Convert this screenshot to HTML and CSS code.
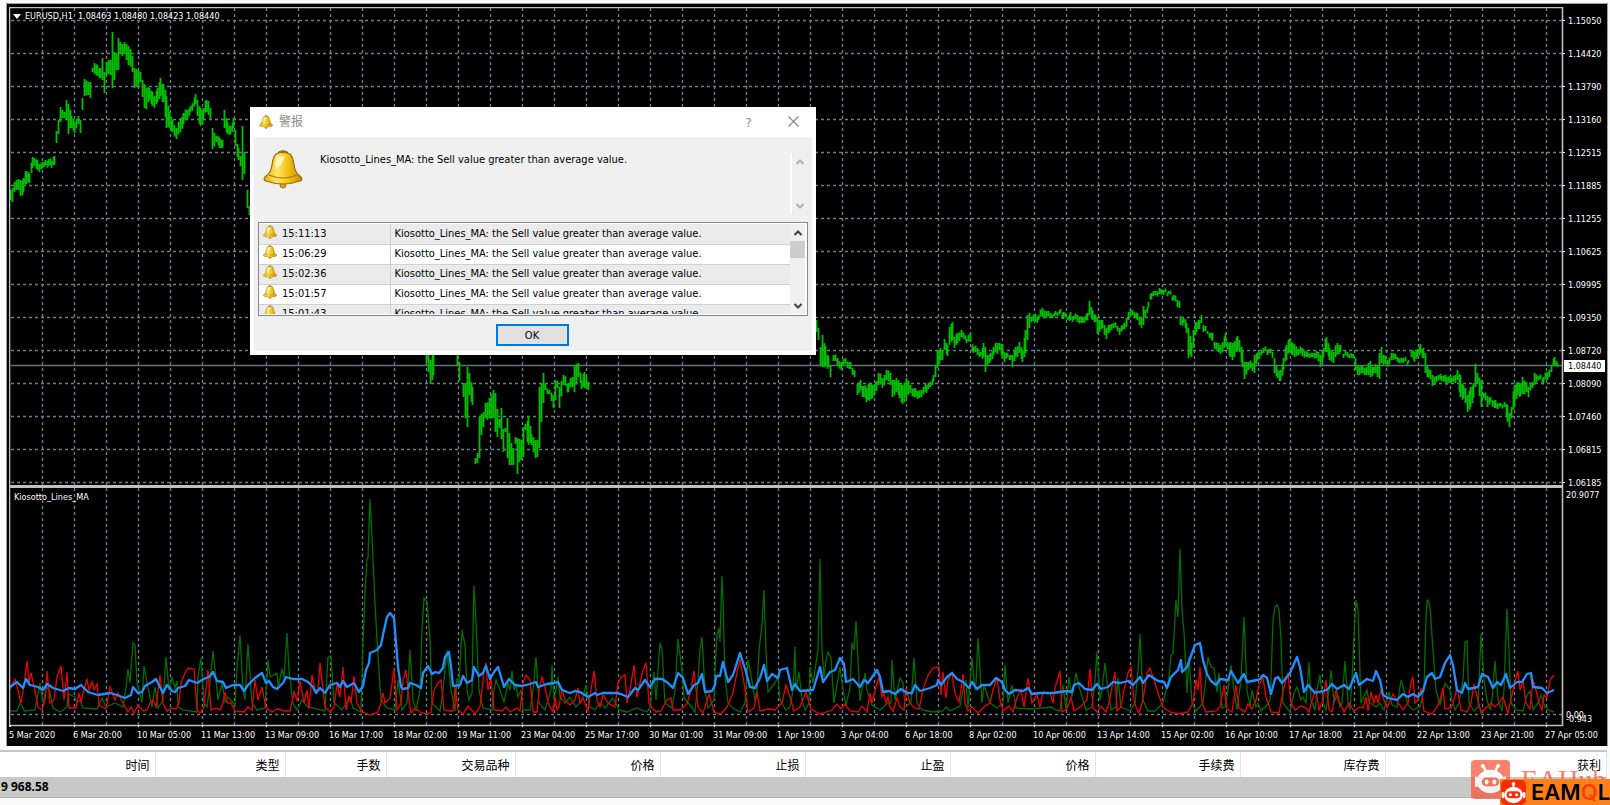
FILE: index.html
```html
<!DOCTYPE html>
<html lang="zh-CN">
<head>
    <meta charset="UTF-8">
    <meta name="viewport" content="width=device-width, initial-scale=1.0">
    <title>EURUSD,H1</title>
    <link rel="stylesheet" href="styles.css">
</head>
<body>
    <svg class="defs" width="0" height="0" aria-hidden="true">
        <defs>
            <linearGradient id="gold" x1="0" x2="1" y1="0" y2="0">
                <stop offset="0" stop-color="#e9b208"/>
                <stop offset="0.35" stop-color="#ffe566"/>
                <stop offset="0.65" stop-color="#f0c010"/>
                <stop offset="1" stop-color="#c98a00"/>
            </linearGradient>
            <symbol id="bell" viewBox="0 0 40 40">
                <circle cx="20" cy="36" r="3" fill="#e0a810" stroke="#9a6a10"/>
                <path d="M15 3.500Q20 0 25 3.500L24 5H16Z" fill="#b07a18" stroke="#7d5510"/>
                <path d="M13 5Q20 2 27 5Q30 8 31 16Q32 24 38 28Q40 31 37 32Q20 38 3 32Q0 31 2 28Q8 24 9 16Q10 8 13 5Z" fill="url(#gold)" stroke="#9a6a10" stroke-width="1.200"/>
                <path d="M6 26Q20 32 34 26" fill="none" stroke="#a87610" stroke-width="1.200"/>
                <path d="M14 8Q12 14 12 20Q19 18 22 7Z" fill="#fffbd0" opacity=".8"/>
            </symbol>
            <symbol id="up" viewBox="0 0 10 10"><path d="M1.500 7L5 3.500L8.500 7" fill="none" stroke="currentColor" stroke-width="2"/></symbol>
            <symbol id="down" viewBox="0 0 10 10"><path d="M1.500 3L5 6.500L8.500 3" fill="none" stroke="currentColor" stroke-width="2"/></symbol>
            <symbol id="robot" viewBox="0 0 40 40">
                <path d="M12 5L15 11M28 5L25 11" stroke="#fff" stroke-width="2.500"/>
                <circle cx="12" cy="6" r="2" fill="#fff"/>
                <circle cx="28" cy="6" r="2" fill="#fff"/>
                <ellipse cx="20" cy="22" rx="14" ry="12" fill="#fff"/>
                <rect x="4" y="17" width="3" height="11" rx="1.500" fill="#fff"/>
                <rect x="33" y="17" width="3" height="11" rx="1.500" fill="#fff"/>
                <rect x="11" y="18" width="18" height="9" rx="4.500" fill="currentColor"/>
                <rect x="14" y="20" width="4" height="5" rx="2" fill="#fff"/>
                <rect x="22" y="20" width="4" height="5" rx="2" fill="#fff"/>
            </symbol>
            <symbol id="robot-small" viewBox="0 0 40 40">
                <path d="M20 6V13" stroke="#fff" stroke-width="3"/>
                <circle cx="20" cy="6" r="3" fill="#fff"/>
                <ellipse cx="20" cy="24" rx="15" ry="13" fill="#fff"/>
                <rect x="1" y="19" width="4" height="10" rx="2" fill="#fff"/>
                <rect x="35" y="19" width="4" height="10" rx="2" fill="#fff"/>
                <rect x="9" y="18" width="22" height="11" rx="5.500" fill="currentColor"/>
                <circle cx="15" cy="23.500" r="2.500" fill="#fff"/>
                <circle cx="25" cy="23.500" r="2.500" fill="#fff"/>
            </symbol>
        </defs>
    </svg>

    <main class="chart">
        <div class="plot">
            <svg id="plot" viewBox="9 7 1557 720" preserveAspectRatio="none"></svg>
            <div class="symbol-title">
                <svg width="8" height="5" viewBox="0 0 8 5"><path d="M0 0H8L4 5Z" fill="#fff"/></svg>
                <span>EURUSD,H1&nbsp; 1.08463 1.08480 1.08423 1.08440</span>
            </div>
            <div class="indicator-title">Kiosotto_Lines_MA</div>
        </div>
        <div class="prices">
            <div class="scale">
                <span>1.15050</span>
                <span>1.14420</span>
                <span>1.13790</span>
                <span>1.13160</span>
                <span>1.12515</span>
                <span>1.11885</span>
                <span>1.11255</span>
                <span>1.10625</span>
                <span>1.09995</span>
                <span>1.09350</span>
                <span>1.08720</span>
                <span>1.08090</span>
                <span>1.07460</span>
                <span>1.06815</span>
                <span>1.06185</span>
            </div>
            <div class="indicator-max">20.9077</div>
            <div class="indicator-min">
                <span>0.00</span>
                <span>-0.943</span>
            </div>
            <div class="current-price">1.08440</div>
        </div>
        <div class="times">
            <span>5 Mar 2020</span>
            <span>6 Mar 20:00</span>
            <span>10 Mar 05:00</span>
            <span>11 Mar 13:00</span>
            <span>13 Mar 09:00</span>
            <span>16 Mar 17:00</span>
            <span>18 Mar 02:00</span>
            <span>19 Mar 11:00</span>
            <span>23 Mar 04:00</span>
            <span>25 Mar 17:00</span>
            <span>30 Mar 01:00</span>
            <span>31 Mar 09:00</span>
            <span>1 Apr 19:00</span>
            <span>3 Apr 04:00</span>
            <span>6 Apr 18:00</span>
            <span>8 Apr 02:00</span>
            <span>10 Apr 06:00</span>
            <span>13 Apr 14:00</span>
            <span>15 Apr 02:00</span>
            <span>16 Apr 10:00</span>
            <span>17 Apr 18:00</span>
            <span>21 Apr 04:00</span>
            <span>22 Apr 13:00</span>
            <span>23 Apr 21:00</span>
            <span>27 Apr 05:00</span>
        </div>
    </main>

    <section class="terminal">
        <table>
            <colgroup>
                <col class="c-time"><col class="c-type"><col class="c-lots"><col class="c-symbol">
                <col class="c-num"><col class="c-num"><col class="c-num"><col class="c-num"><col class="c-num"><col class="c-num">
                <col>
            </colgroup>
            <thead>
                <tr>
                    <th>时间</th>
                    <th>类型</th>
                    <th>手数</th>
                    <th>交易品种</th>
                    <th>价格</th>
                    <th>止损</th>
                    <th>止盈</th>
                    <th>价格</th>
                    <th>手续费</th>
                    <th>库存费</th>
                    <th>获利</th>
                </tr>
            </thead>
            <tbody>
                <tr>
                    <td colspan="11">9 968.58</td>
                </tr>
            </tbody>
        </table>
    </section>

    <div class="alert" role="dialog" aria-labelledby="alert-title">
        <header class="alert-bar">
            <svg class="bell-small"><use href="#bell"/></svg>
            <h1 id="alert-title">警报</h1>
            <button class="bar-button" type="button" aria-label="Help">?</button>
            <button class="bar-button" type="button" aria-label="Close">
                <svg width="11" height="11" viewBox="0 0 11 11"><path d="M0.500 0.500L10.500 10.500M10.500 0.500L0.500 10.500" stroke="#8a8a8a" stroke-width="1.200"/></svg>
            </button>
        </header>
        <div class="alert-body">
            <div class="message">
                <svg class="bell-big"><use href="#bell"/></svg>
                <p>Kiosotto_Lines_MA: the Sell value greater than average value.</p>
                <div class="scroll scroll-off">
                    <button type="button" aria-label="Up" disabled><svg><use href="#up"/></svg></button>
                    <button type="button" aria-label="Down" disabled><svg><use href="#down"/></svg></button>
                </div>
            </div>
            <div class="list">
                <div class="list-view">
                    <table>
                        <tbody>
                            <tr>
                                <td class="time"><svg class="bell-small"><use href="#bell"/></svg>15:11:13</td>
                                <td>Kiosotto_Lines_MA: the Sell value greater than average value.</td>
                            </tr>
                            <tr>
                                <td class="time"><svg class="bell-small"><use href="#bell"/></svg>15:06:29</td>
                                <td>Kiosotto_Lines_MA: the Sell value greater than average value.</td>
                            </tr>
                            <tr>
                                <td class="time"><svg class="bell-small"><use href="#bell"/></svg>15:02:36</td>
                                <td>Kiosotto_Lines_MA: the Sell value greater than average value.</td>
                            </tr>
                            <tr>
                                <td class="time"><svg class="bell-small"><use href="#bell"/></svg>15:01:57</td>
                                <td>Kiosotto_Lines_MA: the Sell value greater than average value.</td>
                            </tr>
                            <tr>
                                <td class="time"><svg class="bell-small"><use href="#bell"/></svg>15:01:43</td>
                                <td>Kiosotto_Lines_MA: the Sell value greater than average value.</td>
                            </tr>
                        </tbody>
                    </table>
                </div>
                <div class="scroll">
                    <button type="button" aria-label="Up"><svg><use href="#up"/></svg></button>
                    <div class="thumb"></div>
                    <button type="button" aria-label="Down"><svg><use href="#down"/></svg></button>
                </div>
            </div>
            <button class="ok" type="button">OK</button>
        </div>
    </div>

    <div class="eahub">
        <svg><use href="#robot"/></svg>
        <span>EAHub</span>
    </div>
    <div class="eamql">
        <svg><use href="#robot-small"/></svg>
        <span>EAM<b>Q</b>L</span>
    </div>

    <script src="chart.js"></script>
</body>
</html>
```
FILE: styles.css
```css
* {
    box-sizing: border-box;
}
body {
    margin: 0;
    padding-top: 3px;
    position: relative;
    min-height: 100vh;
    overflow: hidden;
    background-color: #fafafa;
    font-family: "DejaVu Sans Condensed", "Noto Sans", "Noto Sans CJK SC", sans-serif;
    font-size: 11px;
    color: #000;
}
.defs {
    position: absolute;
}
button {
    margin: 0;
    padding: 0;
    border: none;
    background: none;
    font: inherit;
}

/* chart */
.chart {
    display: grid;
    grid-template-columns: 1fr 41px;
    grid-template-rows: 720px 19px;
    margin: 0 2px 0 6px;
    padding: 3px 0 0 2px;
    border: 1px solid #a0a0a0;
    border-width: 1px 1px 0 1px;
    background-color: #000;
    color: #fff;
    font-size: 9px;
    line-height: 12px;
}
.plot {
    position: relative;
}
.plot > svg {
    display: block;
    width: 100%;
    height: 720px;
}
.symbol-title {
    position: absolute;
    top: 3px;
    left: 4px;
    display: flex;
    align-items: center;
    gap: 4px;
}
.indicator-title {
    position: absolute;
    top: 484px;
    left: 5px;
}
.prices {
    position: relative;
    display: flex;
    flex-direction: column;
    padding: 8px 0 2px;
}
.scale {
    display: flex;
    flex-direction: column;
    gap: 21px;
    padding-left: 2px;
}
.indicator-min {
    display: flex;
    flex-direction: column;
    margin-top: auto;
}
.indicator-min span + span {
    margin-top: -8px;
}
.current-price {
    position: absolute;
    top: 353px;
    left: -2px;
    width: 41px;
    padding-left: 4px;
    background-color: #fff;
    color: #000;
}
.times {
    grid-column: 1 / 3;
    display: flex;
    padding-top: 2px;
}
.times span {
    flex: 0 0 64px;
    width: 64px;
    white-space: nowrap;
}

/* terminal */
.terminal {
    margin: 4px 3px 0 0;
    border-top: 2px solid #c4c4c4;
}
.terminal table {
    width: 100%;
    table-layout: fixed;
    border-collapse: collapse;
    background-color: #fff;
}
.c-time { width: 155px; }
.c-type { width: 130px; }
.c-lots { width: 101px; }
.c-symbol { width: 129px; }
.c-num { width: 145px; }
.terminal th {
    height: 25px;
    padding: 0 5px 0 0;
    border-right: 1px solid #e4e4e4;
    font-family: "Noto Sans CJK SC", sans-serif;
    font-size: 12px;
    font-weight: normal;
    line-height: 20px;
    text-align: right;
}
.terminal td {
    height: 20px;
    padding: 0 1px;
    border-bottom: 1px solid #b0b0b0;
    background-color: #c8c8c8;
    font-family: "Noto Sans", sans-serif;
    font-size: 12px;
    font-weight: bold;
    line-height: 19px;
}

/* alert window */
.alert {
    position: absolute;
    top: 107px;
    left: 250px;
    width: 566px;
    padding: 0 4px 4px;
    background-color: #fff;
}
.alert-bar {
    display: flex;
    align-items: center;
    height: 30px;
    margin-right: -4px;
    padding-left: 5px;
    color: #8a8a8a;
}
.alert-bar h1 {
    flex: 1;
    margin: 0 0 0 6px;
    font-size: 12px;
    font-weight: normal;
    line-height: 18px;
}
.bell-small {
    width: 14px;
    height: 14px;
}
.bar-button {
    width: 45px;
    height: 30px;
    color: #8a8a8a;
    font-size: 13px;
}
.alert-body {
    display: flex;
    flex-direction: column;
    padding: 12px 4px 5px;
    background-color: #f0f0f0;
}
.message {
    display: flex;
    height: 73px;
    padding: 0 0 0 5px;
}
.bell-big {
    width: 40px;
    height: 40px;
}
.message p {
    flex: 1;
    margin: 3px 0 0 17px;
    line-height: 16px;
}
.scroll {
    display: flex;
    flex-direction: column;
    width: 15px;
    background-color: #f0f0f0;
    color: #404040;
}
.scroll button {
    height: 17px;
    color: inherit;
}
.scroll svg {
    display: block;
    width: 10px;
    height: 10px;
    margin: 0 auto;
}
.scroll button:last-child {
    margin-top: auto;
}
.scroll-off {
    width: 18px;
    height: 61px;
    margin-top: 4px;
    border-left: 2px solid #fff;
    color: #b0b0b0;
}
.thumb {
    height: 17px;
    background-color: #cdcdcd;
}
.list {
    display: flex;
    height: 94px;
    padding: 1px 2px 1px 0;
    border: 1px solid #828790;
    background-color: #fff;
}
.list-view {
    flex: 1;
    overflow: hidden;
}
.list table {
    width: 100%;
    table-layout: fixed;
    border-collapse: collapse;
}
.list td {
    height: 20px;
    padding: 0 4px;
    border-bottom: 1px solid #d0d0d0;
    line-height: 18px;
}
.list tr:nth-child(odd) td {
    background-color: #ebebeb;
}
.list .time {
    width: 131px;
    border-right: 1px solid #d0d0d0;
}
.list .bell-small {
    margin-right: 5px;
    vertical-align: -2px;
}
.ok {
    align-self: center;
    width: 73px;
    height: 22px;
    margin: 8px 2px 0 0;
    border: 2px solid #0078d7;
    background-color: #e1e1e1;
}

/* logos */
.eahub {
    position: absolute;
    left: 1471px;
    bottom: 6px;
    display: flex;
    align-items: center;
    gap: 11px;
    opacity: .75;
    color: #f5593d;
    font: 28px/30px "Liberation Serif", serif;
}
.eahub svg {
    width: 39px;
    height: 39px;
    border-radius: 4px;
    background-color: #f5593d;
}
.eamql {
    position: absolute;
    right: 0;
    bottom: 0;
    display: flex;
    align-items: center;
    gap: 5px;
    width: 110px;
    height: 26px;
    padding-left: 1px;
    overflow: hidden;
    background-color: #ff8019;
    color: #000;
    font: 600 22px/26px Inter, "Liberation Sans", sans-serif;
}
.eamql svg {
    flex: none;
    width: 25px;
    height: 25px;
    border-radius: 5px;
    background-color: #f62a05;
    color: #f62a05;
}
.eamql b {
    color: #f2400a;
    font-weight: inherit;
}
```
FILE: chart.js
```js
// price bars: x, high, low; a 0 starts a new group after a gap
const bars = [
    10,190,200, 12,188,202, 14,182,192, 16,180,190, 18,179,190, 20,180,196, 23,178,192, 26,171,184, 29,174,183, 32,157,168, 34,158,166, 37,160,170, 39,164,172, 42,162,168, 45,160,165, 48,159,166, 51,161,168, 54,156,165, 0,0,0,
    56,131,143, 58,120,134, 60,107,122, 62,110,118, 64,112,118, 66,100,120, 68,104,134, 71,116,128, 74,122,133, 78,116,124, 80,120,133, 0,0,0,
    82,98,110, 84,79,96, 88,82,95, 90,82,98, 0,0,0,
    92,68,72, 94,63,74, 97,65,76, 100,68,78, 102,58,80, 104,72,93, 106,62,75, 110,60,75, 112,32,88, 114,52,80, 116,53,70, 118,38,70, 120,42,54, 124,42,54, 126,44,60, 128,46,65, 132,56,72, 134,68,88, 138,70,86, 140,72,82, 144,84,108, 146,88,109, 149,88,100, 152,92,106, 154,96,108, 157,88,102, 160,78,96, 163,84,102, 166,96,128, 169,112,128, 172,120,132, 176,128,139, 180,118,132, 183,113,124, 187,110,120, 190,106,112, 195,94,104, 197,100,116, 200,108,126, 203,108,120, 206,100,112, 208,101,115, 210,108,119, 0,0,0,
    212,128,149, 216,136,142, 219,138,148, 222,140,148, 0,0,0,
    224,110,128, 227,122,134, 230,126,134, 233,118,128, 235,130,146, 238,148,160, 240,156,166, 242,126,180, 244,152,174, 0,0,0,
    247,190,208, 249,206,215, 0,0,0,
    426,350,362, 428,352,372, 430,360,384, 433,350,375, 0,0,0,
    457,350,365, 459,362,381, 0,0,0,
    463,383,397, 465,383,418, 467,367,427, 469,373,395, 472,387,405, 0,0,0,
    475,458,464, 477,453,463, 479,417,458, 481,414,435, 483,412,427, 485,403,418, 489,398,418, 493,390,418, 495,393,432, 497,409,437, 499,419,428, 501,408,439, 503,429,452, 505,428,432, 507,418,458, 509,433,465, 511,443,465, 513,448,465, 0,0,0,
    515,437,444, 517,438,474, 519,439,462, 521,440,460, 523,427,457, 525,424,430, 528,416,445, 531,434,445, 533,437,452, 535,440,458, 537,440,457, 539,387,448, 541,383,422, 543,373,403, 545,383,390, 549,390,394, 553,395,408, 555,380,400, 557,381,388, 559,387,408, 563,375,385, 568,383,392, 572,377,387, 574,365,392, 578,363,377, 581,380,389, 584,372,388, 588,382,390, 0,0,0,
    816,320,332, 818,328,340, 820,347,366, 822,335,367, 825,346,366, 828,356,367, 830,366,377, 0,0,0,
    833,355,361, 837,358,365, 841,362,370, 845,358,364, 850,362,369, 854,370,377, 0,0,0,
    857,384,395, 860,380,390, 863,386,397, 866,388,402, 869,383,401, 872,385,398, 876,381,391, 878,373,385, 882,378,388, 886,370,380, 890,373,385, 892,380,397, 896,378,392, 899,383,398, 902,385,404, 906,378,398, 910,385,393, 915,388,397, 921,390,397, 926,385,393, 930,382,387, 933,375,381, 935,365,377, 937,350,368, 940,348,360, 942,350,360, 944,339,350, 947,345,356, 949,327,345, 952,322,340, 954,337,348, 957,333,343, 961,330,337, 966,339,343, 970,333,342, 973,347,353, 977,348,355, 980,352,356, 983,343,357, 985,347,372, 987,355,365, 990,353,361, 993,347,355, 997,343,354, 999,343,350, 1002,344,358, 1004,352,362, 1007,353,357, 1010,355,360, 1012,355,367, 1015,347,357, 1019,342,353, 1022,350,362, 1025,330,353, 1027,315,340, 1029,313,328, 1031,317,322, 1035,314,322, 1038,315,320, 1042,308,317, 1046,311,318, 1050,313,317, 1055,311,315, 1060,309,313, 1063,312,319, 1067,317,320, 1070,312,320, 1073,316,320, 1077,315,322, 1082,317,323, 1087,313,320, 1089,301,315, 1092,310,320, 1095,315,322, 1097,317,334, 1099,320,332, 1102,320,328, 1104,325,335, 1106,328,339, 1109,325,332, 1113,323,328, 1117,326,331, 1119,328,335, 1122,325,330, 1126,318,327, 1128,312,320, 1132,310,315, 1137,313,320, 1141,318,328, 1143,306,325, 1145,310,318, 1148,302,307, 1151,293,299, 1155,291,295, 1159,288,294, 1163,290,295, 1168,291,294, 1173,295,300, 1177,300,307, 1179,301,308, 0,0,0,
    1180,316,325, 1183,318,323, 1186,323,333, 1188,328,358, 1191,343,357, 1193,330,348, 1196,322,332, 1199,320,329, 1201,315,323, 1203,325,332, 1207,331,334, 1212,333,341, 1214,342,349, 1218,343,352, 1220,345,354, 1225,333,345, 1227,342,350, 1230,342,357, 1232,343,360, 1237,336,350, 1239,340,352, 1242,350,367, 1244,362,379, 1248,362,370, 1252,363,371, 1254,355,373, 1257,353,360, 1263,348,353, 1268,349,353, 1272,352,358, 1274,358,373, 1277,370,378, 1280,370,381, 1283,358,370, 1286,345,360, 1289,339,352, 1292,343,355, 1294,344,357, 1298,349,355, 1302,348,356, 1307,352,357, 1312,353,357, 1316,351,358, 1320,355,367, 1323,348,357, 1326,337,352, 1329,348,360, 1333,352,363, 1337,343,355, 1340,345,352, 0,0,0,
    1343,354,358, 1347,352,357, 1353,354,358, 1355,358,370, 1357,365,375, 1362,366,373, 1366,367,375, 1370,361,377, 1373,367,373, 1377,365,377, 1379,353,379, 1381,347,363, 1383,355,365, 1387,360,367, 1391,353,360, 1397,357,362, 1403,358,363, 1408,360,363, 0,0,0,
    1411,350,357, 1414,352,362, 1417,349,357, 1420,344,353, 1423,348,358, 1425,353,373, 1428,369,377, 1432,375,386, 1436,376,382, 1441,376,381, 1446,377,385, 1451,378,383, 1455,375,383, 1457,370,380, 1460,375,397, 1463,385,398, 1467,395,412, 1470,387,407, 1473,383,398, 1475,364,387, 1477,373,383, 1481,380,407, 1483,393,398, 1487,396,407, 1490,397,402, 1495,400,408, 1500,403,406, 1504,402,407, 1507,405,422, 1509,413,427, 1511,407,418, 1514,385,407, 1517,382,395, 1520,383,396, 1522,377,394, 1526,382,392, 1528,387,397, 1532,382,388, 1534,373,385, 1538,376,380, 1543,377,383, 1547,372,380, 1551,365,372, 1554,357,365, 1557,363,367
];

const buy = '10,711 17,711 20,703 25,711 35,710 40,683 43,703 47,687 50,692 53,708 60,712 67,707 68,694 75,697 77,703 80,700 83,708 97,709 102,698 106,707 115,703 123,707 126,687 128,669 130,683 133,643 135,645 137,683 142,702 144,666 148,688 152,707 155,687 158,708 163,700 166,657 169,690 172,677 175,688 177,681 178,707 183,710 197,712 198,677 201,658 204,703 207,707 210,683 213,651 218,700 222,683 225,702 228,697 235,705 237,667 240,635 243,690 245,700 248,644 252,703 257,710 265,708 268,660 270,677 277,673 278,688 282,669 284,678 287,633 289,670 293,703 297,710 302,700 308,707 325,711 328,657 331,656 334,703 342,710 350,697 353,708 361,712 363,643 365,593 367,559 368,558 370,499 372,537 375,603 378,657 381,700 387,708 395,710 398,680 402,710 407,703 410,650 413,700 416,711 420,690 422,630 424,598 427,602 430,640 432,703 440,711 443,690 447,650 451,690 455,711 457,678 459,683 460,665 462,630 465,645 467,690 469,700 472,693 473,630 474,586 476,622 479,690 483,708 492,710 494,690 496,680 500,690 504,702 508,683 510,690 512,671 514,690 516,685 518,697 521,690 523,710 530,710 533,690 536,657 539,703 545,710 551,690 552,665 554,700 556,690 558,677 560,697 565,703 570,697 576,707 582,700 586,685 590,707 595,710 600,703 605,708 613,698 619,710 627,712 637,708 647,712 650,708 652,690 654,672 656,700 658,670 660,643 662,650 665,703 672,708 675,690 678,639 682,670 684,698 690,705 695,712 698,680 700,650 702,637 705,690 708,708 714,700 715,670 717,635 719,628 720,642 722,576 723,600 725,677 728,703 733,708 740,712 745,703 748,660 751,675 755,700 757,690 759,650 762,625 764,590 766,650 768,692 775,683 778,677 780,700 786,710 790,707 793,690 795,647 796,690 799,672 802,700 805,710 809,703 810,667 813,683 818,650 820,559 822,650 824,677 826,660 828,652 831,658 834,703 840,667 843,690 846,705 850,688 852,643 854,650 856,621 858,660 860,701 862,690 865,673 867,690 872,705 880,710 888,703 891,703 892,660 895,700 900,678 903,683 905,707 911,703 914,658 917,703 922,710 933,712 943,711 946,707 950,711 960,706 963,690 966,680 968,708 972,658 975,690 976,683 978,638 980,670 982,703 984,685 990,703 997,708 1003,703 1005,665 1008,703 1012,685 1016,708 1030,709 1042,708 1052,707 1055,710 1060,711 1063,685 1066,710 1069,677 1072,697 1076,673 1080,690 1086,710 1092,707 1095,680 1097,652 1100,700 1102,690 1105,663 1108,690 1111,710 1116,707 1118,678 1121,707 1130,711 1135,703 1138,670 1140,634 1143,700 1148,711 1155,711 1163,703 1169,678 1171,655 1173,653 1176,600 1178,617 1180,549 1182,610 1184,632 1187,693 1189,657 1192,703 1196,711 1203,703 1206,677 1208,657 1211,667 1214,668 1217,692 1219,673 1222,708 1225,707 1228,690 1231,665 1234,690 1237,710 1241,680 1244,617 1247,690 1250,707 1252,690 1256,707 1258,703 1261,711 1267,705 1270,700 1271,680 1273,620 1275,607 1277,605 1279,610 1281,640 1283,703 1290,712 1294,693 1297,687 1301,700 1303,697 1306,703 1309,662 1311,700 1315,710 1317,690 1320,675 1323,703 1326,710 1329,690 1331,670 1334,703 1337,695 1340,707 1342,703 1345,661 1348,703 1350,710 1352,680 1354,637 1356,600 1358,610 1361,703 1367,690 1369,702 1376,707 1380,703 1384,710 1389,692 1392,705 1397,707 1401,680 1404,690 1408,705 1413,710 1420,707 1424,690 1426,617 1427,601 1428,600 1430,607 1433,650 1436,690 1440,705 1445,683 1450,690 1452,700 1455,710 1459,703 1463,680 1465,642 1467,641 1469,703 1474,711 1478,707 1481,634 1484,680 1487,700 1490,710 1492,700 1495,661 1498,700 1502,711 1504,690 1507,609 1509,650 1511,703 1516,710 1523,711 1527,695 1530,691 1533,710 1538,703 1541,695 1545,707 1550,711 1554,712';

const sell = '10,689 15,679 18,690 21,703 24,685 27,661 29,683 31,673 35,690 38,707 42,710 45,700 47,671 50,703 54,700 57,677 61,666 64,700 67,672 69,708 76,708 79,693 81,702 83,693 87,679 89,690 92,682 94,690 97,684 99,705 106,709 110,687 115,700 118,693 123,703 128,712 131,707 134,713 138,705 143,711 147,710 150,703 153,700 156,707 160,675 163,703 167,711 172,708 176,709 179,703 181,683 185,673 188,668 194,669 197,710 200,713 204,707 208,670 211,710 216,708 220,710 223,703 225,692 227,703 231,703 235,711 244,712 248,707 252,710 255,680 258,700 262,687 266,708 272,712 277,709 285,711 290,711 294,692 297,700 300,681 304,703 307,690 309,709 312,675 315,690 318,690 320,663 323,690 325,707 330,712 334,707 337,684 340,697 343,667 346,710 349,697 351,703 354,676 357,703 362,712 370,715 378,712 381,703 383,693 385,703 390,698 394,669 397,710 401,703 403,680 406,670 409,700 411,713 415,708 420,712 427,714 431,712 434,690 438,683 441,680 444,710 450,711 453,711 455,687 458,710 463,714 468,706 475,714 480,707 484,672 486,663 488,690 491,678 494,710 502,711 506,707 510,712 517,708 520,711 523,683 526,675 530,680 533,712 537,712 539,690 542,677 545,687 548,703 553,712 555,697 557,710 559,707 562,688 565,700 570,705 575,700 578,688 580,703 583,698 588,711 591,690 594,671 597,700 600,707 603,695 608,703 615,707 618,683 621,677 625,675 627,703 630,690 634,665 637,697 640,683 643,670 646,663 649,703 652,708 656,712 661,711 667,700 671,698 673,710 680,710 687,704 691,690 694,671 698,707 703,713 709,694 714,712 721,714 727,707 733,693 737,672 740,659 744,683 748,712 754,708 757,692 760,711 768,709 775,710 782,703 786,685 790,697 794,711 800,707 806,692 811,709 820,714 832,710 837,704 841,709 845,704 850,711 858,712 862,706 867,712 870,693 872,703 876,687 879,677 882,697 884,693 886,703 888,697 890,707 893,711 897,698 900,707 904,710 906,688 910,703 914,708 919,709 923,690 928,675 933,668 939,667 941,695 943,672 946,698 948,680 952,673 955,693 959,702 961,690 963,674 965,703 968,711 972,707 978,713 984,707 990,703 993,690 997,678 1000,700 1003,711 1009,706 1013,712 1017,697 1021,690 1024,707 1028,678 1032,703 1037,695 1040,707 1043,692 1050,693 1053,703 1055,688 1060,671 1062,712 1067,709 1071,697 1074,711 1080,707 1087,700 1090,669 1093,708 1097,712 1101,706 1106,712 1109,703 1112,687 1115,672 1117,711 1121,707 1124,690 1128,673 1131,667 1134,700 1136,707 1139,713 1143,700 1147,673 1150,668 1154,680 1158,693 1163,707 1170,712 1178,714 1188,712 1193,703 1196,680 1198,690 1200,667 1202,703 1206,712 1216,711 1220,707 1224,685 1227,709 1232,712 1236,685 1239,708 1245,712 1248,704 1252,709 1256,700 1259,685 1263,678 1266,697 1271,712 1279,713 1282,697 1285,683 1288,673 1291,703 1295,710 1301,706 1305,707 1309,712 1313,697 1316,690 1319,710 1323,700 1326,680 1329,710 1332,712 1336,690 1340,703 1344,712 1349,703 1354,711 1360,707 1363,708 1366,697 1368,711 1371,692 1374,703 1376,695 1378,703 1381,690 1384,700 1387,708 1393,694 1398,703 1403,710 1408,703 1411,682 1413,677 1415,703 1418,700 1421,688 1424,711 1432,714 1437,707 1440,700 1443,688 1445,709 1451,708 1455,697 1457,687 1461,710 1467,712 1471,703 1474,684 1478,700 1481,713 1487,707 1491,703 1495,707 1499,703 1503,697 1508,713 1513,690 1516,678 1518,671 1520,690 1523,680 1526,703 1530,709 1533,680 1536,690 1539,703 1542,710 1544,695 1547,698 1550,680 1554,675';

const average = '10,687 17,682 23,688 26,679 30,685 38,687 43,690 47,684 53,688 63,691 69,688 75,689 81,685 88,692 98,695 110,693 117,695 125,698 131,695 133,687 138,693 142,692 145,686 152,682 156,679 160,687 163,693 167,685 172,691 175,692 178,688 185,686 189,680 197,683 202,680 206,678 209,677 213,672 217,681 223,682 226,688 233,685 240,685 244,691 248,685 255,678 262,673 266,683 269,681 273,687 277,689 283,683 286,677 293,679 302,679 308,682 313,687 316,693 320,688 325,693 330,685 337,683 340,687 343,681 347,687 354,683 359,692 363,686 366,670 369,663 370,653 377,650 381,645 383,635 387,617 390,613 394,618 396,643 398,667 401,687 403,689 408,688 410,683 416,685 421,688 423,673 428,666 432,674 435,672 439,673 443,668 445,657 449,652 451,667 453,686 460,685 463,676 467,683 472,680 474,667 479,676 483,673 486,666 490,679 494,672 498,667 502,680 504,687 509,679 515,685 522,686 530,684 536,682 538,687 547,684 554,683 558,682 562,690 570,693 575,691 580,692 588,697 595,693 597,695 603,693 618,693 628,697 635,688 638,690 645,680 650,687 655,679 662,679 668,683 673,688 678,673 683,678 688,694 694,685 698,683 702,674 705,692 712,691 715,685 716,676 720,676 723,662 728,682 733,675 740,653 746,672 750,687 755,688 760,678 764,665 767,681 772,674 778,678 780,670 787,668 792,690 795,684 800,691 813,690 820,667 823,682 830,672 835,670 840,658 844,664 846,682 853,679 860,687 864,680 868,683 877,670 880,677 883,692 889,691 895,694 901,689 907,693 912,693 915,685 920,691 930,688 937,685 938,680 941,685 947,677 952,673 957,679 963,682 969,688 972,682 977,689 982,685 990,685 996,678 1002,682 1005,690 1009,694 1015,690 1023,691 1028,688 1032,694 1040,693 1053,693 1067,691 1072,692 1074,685 1079,683 1085,689 1092,690 1097,684 1101,689 1108,687 1113,682 1120,683 1128,681 1133,685 1140,677 1143,683 1149,675 1158,681 1164,682 1167,688 1171,677 1178,670 1181,660 1182,672 1187,667 1192,653 1195,645 1200,643 1203,660 1207,674 1211,681 1216,685 1220,679 1228,680 1231,671 1238,683 1244,674 1247,682 1257,680 1260,679 1263,675 1267,678 1271,694 1275,679 1278,677 1282,683 1290,673 1297,657 1300,667 1304,692 1308,685 1315,693 1327,690 1332,684 1337,689 1344,685 1349,689 1356,673 1359,685 1367,679 1373,681 1376,671 1380,680 1383,695 1388,698 1397,700 1403,694 1408,697 1413,694 1418,697 1423,691 1427,677 1432,673 1435,679 1440,677 1445,663 1450,655 1453,665 1457,690 1462,693 1465,683 1468,689 1478,687 1482,674 1488,677 1493,688 1497,682 1501,685 1506,674 1510,688 1517,682 1522,682 1527,674 1531,673 1533,687 1542,688 1547,693 1554,690';

const svg = document.getElementById('plot');

function add(name, attrs) {
    const el = document.createElementNS('http://www.w3.org/2000/svg', name);
    for (const key in attrs) el.setAttribute(key, attrs[key]);
    svg.appendChild(el);
}

// grid
let grid = '';
for (let x = 42.5; x < 1560; x += 32) grid += `M${x} 8V725`;
for (let y = 20.5; y < 485; y += 33) grid += `M11 ${y}H1562`;
grid += 'M11 714.5H1562';
add('path', { d: grid, stroke: '#6d7c8c', 'stroke-width': 1.4, 'stroke-dasharray': '3 3', fill: 'none' });

// current price
add('path', { d: 'M11 365.5H1562', stroke: '#66707f', 'stroke-width': 1.4 });

// one bar every two pixels, with the range taken between the listed points
let d = '';
for (let i = 0; i + 3 <= bars.length; i += 3) {
    const [x, hi, lo, x2, hi2, lo2] = bars.slice(i, i + 6);
    if (!x) continue;
    d += `M${x + 0.5} ${hi}V${lo}`;
    if (!x2) continue;
    for (let px = x + 2; px < x2; px += 2) {
        const t = (px - x) / (x2 - x);
        const shift = (px * 7) % 5 - 2;
        d += `M${px + 0.5} ${hi + (hi2 - hi) * t + shift}V${lo + (lo2 - lo) * t + shift}`;
    }
}
add('path', { d: d, stroke: '#00be00', 'stroke-width': 1.8 });

// indicator lines
add('polyline', { points: buy, stroke: '#006e00', 'stroke-width': 1.3, fill: 'none' });
add('polyline', { points: sell, stroke: '#ee0000', 'stroke-width': 1.3, fill: 'none' });
add('polyline', { points: average, stroke: '#1e90ff', 'stroke-width': 2.3, fill: 'none', 'stroke-linejoin': 'round' });

// frames and the bar between the two panes
add('path', { d: 'M9.5 727V7.5H1562.5V725.5H9.5', stroke: '#c0c0c0', 'stroke-width': 1.6, fill: 'none' });
add('path', { d: 'M9 486.5H1563', stroke: '#c0c0c0', 'stroke-width': 3 });

// axis ticks
let ticks = '';
for (let y = 20.5; y < 485; y += 33) ticks += `M1563 ${y}h2`;
for (let x = 10.5; x < 1560; x += 64) ticks += `M${x} 725v2`;
add('path', { d: ticks, stroke: '#fff', 'stroke-width': 1 });
```
